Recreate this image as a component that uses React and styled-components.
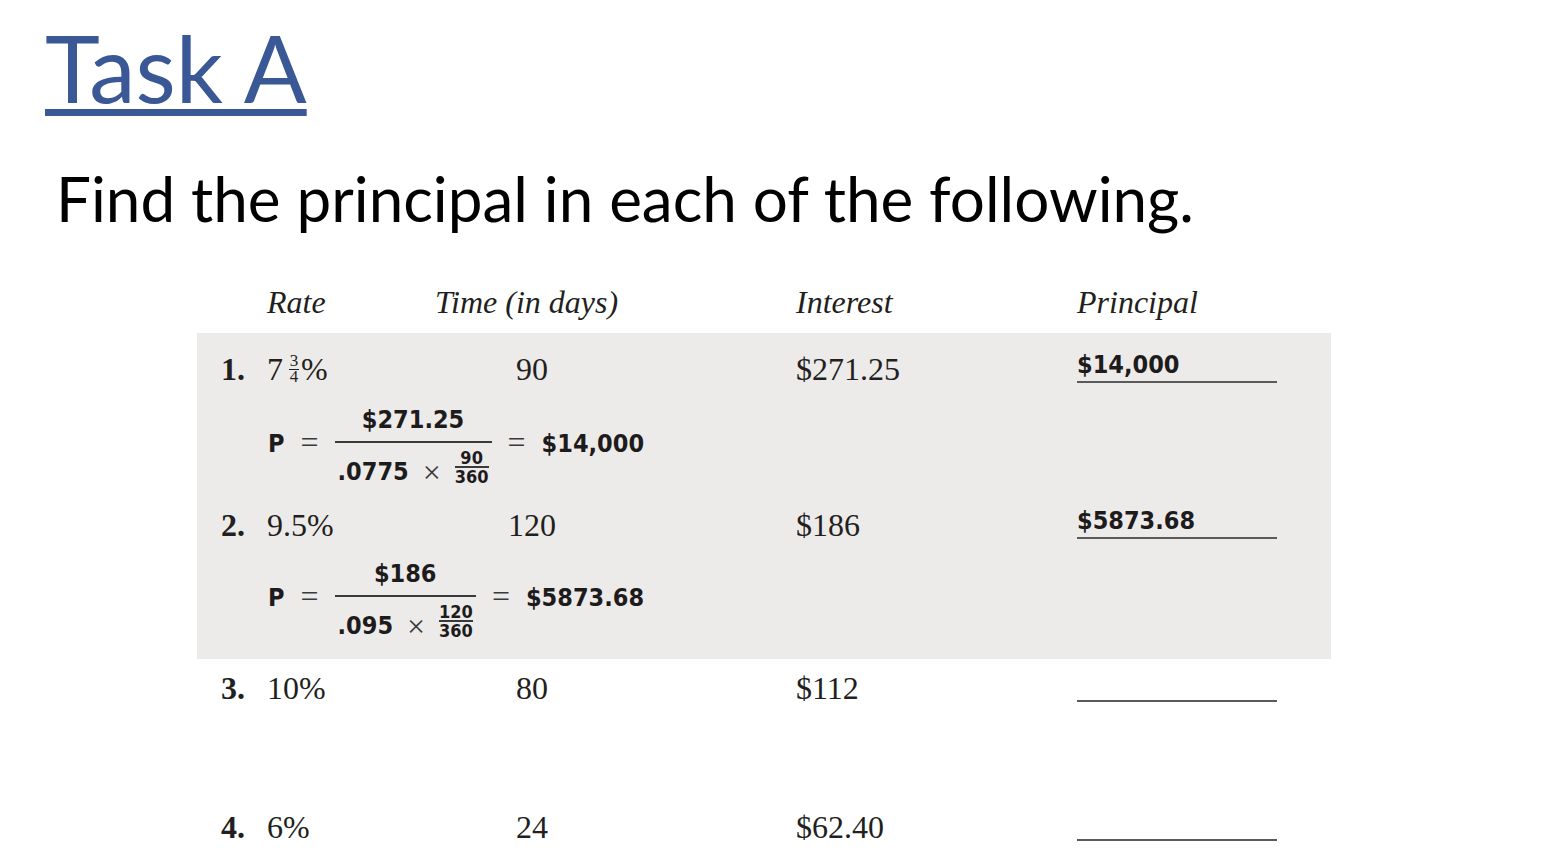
import React from "react";
import styled, { createGlobalStyle } from "styled-components";

const SERIF = "'Liberation Serif', 'Times New Roman', serif";
const SANS = "Lato, 'Open Sans', sans-serif";
const MATH = "'DejaVu Sans Condensed', 'Liberation Sans Narrow', 'Liberation Sans', sans-serif";

const rows = [
  {
    n: "1.",
    rate: { whole: "7", top: "3", bottom: "4" },
    time: "90",
    interest: "$271.25",
    answer: "$14,000",
    h: 62,
    top: 16,
    formula: { num: "$271.25", den: ".0775", days: "90", result: "$14,000" },
  },
  {
    n: "2.",
    rate: "9.5%",
    time: "120",
    interest: "$186",
    answer: "$5873.68",
    h: 60,
    top: 16,
    formula: { num: "$186", den: ".095", days: "120", result: "$5873.68" },
  },
  { n: "3.", rate: "10%", time: "80", interest: "$112", h: 139, top: 9 },
  { n: "4.", rate: "6%", time: "24", interest: "$62.40", h: 70, top: 9 },
];

const GlobalStyle = createGlobalStyle`
  body {
    margin: 0;
    background: #ffffff;
  }
`;

const Formula = ({ num, den, days, result }) => {
  return (
    <FormulaRow>
      <MathText>P</MathText>
      <Eq>=</Eq>
      <Frac>
        <FracTop>{num}</FracTop>
        <FracBar />
        <FracBottom>
          <DenValue>{den}</DenValue>
          <Times>×</Times>
          <SmallFrac>
            <span>{days}</span>
            <SmallBar />
            <span>360</span>
          </SmallFrac>
        </FracBottom>
      </Frac>
      <Eq>=</Eq>
      <MathText>{result}</MathText>
    </FormulaRow>
  );
};

const Rate = ({ rate }) => {
  if (typeof rate === "string") return <Cell>{rate}</Cell>;
  return (
    <Cell>
      {rate.whole}
      <StackFrac>
        <span>{rate.top}</span>
        <StackBar />
        <span>{rate.bottom}</span>
      </StackFrac>
      %
    </Cell>
  );
};

const App = () => {
  const shaded = rows.filter((r) => r.formula);
  const plain = rows.filter((r) => !r.formula);

  const renderRow = (row) => (
    <Row key={row.n} $h={row.h} $top={row.top}>
      <Num>{row.n}</Num>
      <Rate rate={row.rate} />
      <TimeCell>{row.time}</TimeCell>
      <Cell>{row.interest}</Cell>
      <AnswerCell>{row.answer && <Answer>{row.answer}</Answer>}</AnswerCell>
    </Row>
  );

  return (
    <Page>
      <GlobalStyle />
      <Title>Task A</Title>
      <Subtitle>Find the principal in each of the following.</Subtitle>
      <Table>
        <HeaderRow $h={51} $top={0}>
          <span />
          <HeaderCell>Rate</HeaderCell>
          <HeaderCell>Time (in days)</HeaderCell>
          <HeaderCell>Interest</HeaderCell>
          <HeaderCell>Principal</HeaderCell>
        </HeaderRow>
        <Shaded>
          {shaded.map((row) => (
            <React.Fragment key={row.n}>
              {renderRow(row)}
              <Formula {...row.formula} />
            </React.Fragment>
          ))}
        </Shaded>
        {plain.map(renderRow)}
      </Table>
    </Page>
  );
};

const Page = styled.div`
  display: flex;
  flex-direction: column;
  width: 1544px;
  height: 868px;
  overflow: hidden;
  background: #ffffff;
`;

const Title = styled.h1`
  margin: 12px 0 0 45px;
  align-self: flex-start;
  font-family: ${SANS};
  font-weight: 400;
  font-size: 93px;
  line-height: 110px;
  color: #3a5896;
  text-decoration: underline;
  text-decoration-thickness: 7px;
  text-underline-offset: 6px;
`;

const Subtitle = styled.p`
  margin: 38px 0 0 56px;
  font-family: ${SANS};
  font-size: 62px;
  line-height: 76px;
  color: #000000;
`;

const Table = styled.div`
  display: flex;
  flex-direction: column;
  width: 1134px;
  margin: 46px 0 0 197px;
  color: #231f20;
`;

const Row = styled.div`
  display: grid;
  grid-template-columns: 46px 168px 361px 281px 200px;
  align-items: start;
  box-sizing: border-box;
  height: ${(p) => p.$h}px;
  padding: ${(p) => p.$top}px 0 0 24px;
  font-family: ${SERIF};
  font-size: 32px;
  line-height: 40px;
`;

const HeaderRow = styled(Row)`
  font-style: italic;
`;

const HeaderCell = styled.span`
  white-space: nowrap;
`;

const Shaded = styled.div`
  display: flex;
  flex-direction: column;
  background: #edebea;
  padding-bottom: 16px;
`;

const Num = styled.span`
  font-weight: 700;
`;

const Cell = styled.span`
  white-space: nowrap;
`;

const TimeCell = styled.span`
  width: 194px;
  text-align: center;
`;

const AnswerCell = styled.div`
  display: flex;
  align-items: flex-end;
  height: 34px;
  padding-bottom: 3px;
  box-sizing: border-box;
  border-bottom: 2px solid #5a5a5a;
`;

const Answer = styled.span`
  font-family: ${MATH};
  font-weight: 700;
  font-size: 25px;
  line-height: 27px;
  color: #1e1b1c;
`;

const StackFrac = styled.span`
  display: inline-flex;
  flex-direction: column;
  align-items: center;
  vertical-align: 14px;
  margin: 0 2px 0 6px;
  font-size: 17px;
  line-height: 14px;
`;

const StackBar = styled.span`
  width: 10px;
  height: 1px;
  margin: 1px 0 0;
  background: #231f20;
`;

const FormulaRow = styled.div`
  display: flex;
  align-items: center;
  gap: 16px;
  height: 94px;
  padding-left: 71px;
  font-family: ${MATH};
  font-weight: 700;
  font-size: 25px;
  color: #1e1b1c;
`;

const MathText = styled.span`
  line-height: 30px;
  padding-top: 4px;
  white-space: nowrap;
`;

const Eq = styled.span`
  font-family: ${SERIF};
  font-weight: 400;
  font-size: 32px;
  line-height: 30px;
  color: #3a3a3a;
`;

const Frac = styled.span`
  display: inline-flex;
  flex-direction: column;
  align-items: stretch;
`;

const FracTop = styled.span`
  display: flex;
  justify-content: center;
  align-items: flex-end;
  height: 46px;
  padding-bottom: 6px;
  box-sizing: border-box;
  line-height: 30px;
`;

const FracBar = styled.span`
  height: 2px;
  background: #3a3a3a;
`;

const FracBottom = styled.span`
  display: flex;
  align-items: flex-start;
  gap: 14px;
  height: 46px;
  padding: 0 3px;
`;

const DenValue = styled.span`
  margin-top: 14px;
  line-height: 30px;
`;

const Times = styled.span`
  margin-top: 14px;
  font-family: ${SERIF};
  font-weight: 400;
  font-size: 32px;
  line-height: 30px;
  color: #3a3a3a;
`;

const SmallFrac = styled.span`
  display: inline-flex;
  flex-direction: column;
  align-items: center;
  margin-top: 6px;
  font-size: 18px;
  line-height: 17px;
`;

const SmallBar = styled.span`
  align-self: stretch;
  height: 1.5px;
  background: #3a3a3a;
`;

export default App;
